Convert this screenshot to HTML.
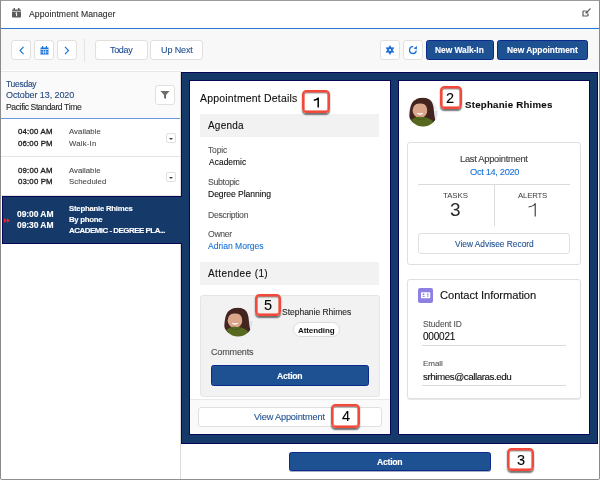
<!DOCTYPE html>
<html><head><meta charset="utf-8">
<style>
*{box-sizing:border-box;margin:0;padding:0}
html,body{width:600px;height:480px;overflow:hidden;background:#fff}
body{font-family:"Liberation Sans",sans-serif;color:#080707;position:relative}
.a{position:absolute}
.t{position:absolute;white-space:nowrap;line-height:1;will-change:transform;-webkit-text-stroke:0.1px currentColor}
.frame{position:absolute;left:0;top:0;width:600px;height:480px;border:1px solid #8a8a8a;border-top-color:#9a9a9a;border-bottom-color:#8f8f8f;border-radius:0 0 2px 2px;pointer-events:none}
.btn{position:absolute;background:#fff;border:1px solid #e1e0df;border-radius:3px}
.bb{position:absolute;background:#1e5192;border:1px solid #0b2a8c;border-radius:2.5px}
.badge{position:absolute;border:2px solid #f2493a;border-radius:4.5px;box-shadow:0 1.2px 1.5px rgba(0,0,0,.55), inset 0 0 0 0.8px rgba(242,73,58,.75), inset 0 1.6px 1px rgba(20,60,60,.45);font-family:"Liberation Sans",sans-serif;color:#000;text-align:center}
</style></head><body>

<!-- title bar -->
<svg class="a" style="left:12px;top:8px" width="9" height="9.5" viewBox="0 0 9 9.5">
  <rect x="0" y="1.4" width="9" height="8.1" rx="0.9" fill="#5c5c5c"/>
  <rect x="1.5" y="0" width="1.5" height="2.4" fill="#5c5c5c"/>
  <rect x="6" y="0" width="1.5" height="2.4" fill="#5c5c5c"/>
  <rect x="0" y="2.9" width="9" height="0.7" fill="#fff"/>
  <path d="M3.6 5.3 L4.6 4.7 V8.2" fill="none" stroke="#fff" stroke-width="1"/>
</svg>
<svg class="a" style="left:582px;top:8.4px" width="9" height="9" viewBox="0 0 9 9">
  <path d="M1 3 V8 H6" fill="none" stroke="#5c5c5c" stroke-width="1.2"/>
  <path d="M1 3 H3 M6 8 V6" fill="none" stroke="#5c5c5c" stroke-width="1.2"/>
  <path d="M8.5 0.5 L4 5 M4 2.5 V5 H6.5" fill="none" stroke="#5c5c5c" stroke-width="1.1"/>
</svg>
<div class="a" style="left:1px;top:28px;width:598px;height:1px;background:#2a76d2"></div>

<!-- toolbar -->
<div class="a" style="left:1px;top:29px;width:598px;height:41px;background:#f8f8f8"></div>
<div class="btn" style="left:11px;top:40px;width:20px;height:20px"></div>
<div class="btn" style="left:34px;top:40px;width:20px;height:20px"></div>
<div class="btn" style="left:57px;top:40px;width:20px;height:20px"></div>
<svg class="a" style="left:19px;top:46px" width="6" height="9" viewBox="0 0 6 9"><path d="M4.5 0.8 L1 4.5 L4.5 8.2" fill="none" stroke="#1b6fd6" stroke-width="1.1"/></svg>
<svg class="a" style="left:40px;top:46px" width="9" height="9" viewBox="0 0 9 9">
  <rect x="0.5" y="1.5" width="8" height="7" fill="#1b72d8"/>
  <rect x="2" y="0" width="1.2" height="2" fill="#1b72d8"/><rect x="5.8" y="0" width="1.2" height="2" fill="#1b72d8"/>
  <rect x="0.5" y="3" width="8" height="0.7" fill="#fff"/>
  <rect x="3" y="4" width="0.6" height="4" fill="#fff"/><rect x="5.4" y="4" width="0.6" height="4" fill="#fff"/>
  <rect x="0.5" y="5.7" width="8" height="0.6" fill="#fff"/>
</svg>
<svg class="a" style="left:63.5px;top:46px" width="6" height="9" viewBox="0 0 6 9"><path d="M1 0.8 L4.5 4.5 L1 8.2" fill="none" stroke="#1b6fd6" stroke-width="1.1"/></svg>
<div class="a" style="left:84px;top:39px;width:1px;height:23px;background:#e3e3e3"></div>
<div class="btn" style="left:95px;top:40px;width:53px;height:20px"></div>
<div class="btn" style="left:150px;top:40px;width:53px;height:20px"></div>

<div class="btn" style="left:380px;top:40px;width:20px;height:20px"></div>
<svg class="a" style="left:385px;top:45px" width="10" height="10" viewBox="0 0 10 10">
  <path d="M5 0.6 L6.3 2.7 L8.8 2.7 L7.5 5 L8.8 7.3 L6.3 7.3 L5 9.4 L3.7 7.3 L1.2 7.3 L2.5 5 L1.2 2.7 L3.7 2.7 Z" fill="#1b6fd6" stroke="#1b6fd6" stroke-width="0.6" stroke-linejoin="round"/>
  <circle cx="5" cy="5" r="1.1" fill="#fff"/>
</svg>
<div class="btn" style="left:403px;top:40px;width:20px;height:20px"></div>
<svg class="a" style="left:408px;top:45px" width="10" height="10" viewBox="0 0 10 10">
  <path d="M8.3 5.6 A3.4 3.4 0 1 1 5.2 1.7" fill="none" stroke="#1b6fd6" stroke-width="1.3"/>
  <path d="M5.6 3.6 L8.9 0.9 L8.9 4.4 Z" fill="#1b6fd6"/>
</svg>
<div class="bb" style="left:426px;top:40px;width:68px;height:20px"></div>
<div class="bb" style="left:497px;top:40px;width:91px;height:20px"></div>

<!-- left panel -->
<div class="a" style="left:1px;top:71px;width:179px;height:1px;background:#e6e6e6"></div>
<div class="a" style="left:1px;top:72px;width:179px;height:46px;background:#fafafa"></div>
<div class="a" style="left:1px;top:118px;width:179px;height:1px;background:#6a98dc"></div>
<div class="a" style="left:180px;top:71px;width:1px;height:408px;background:#dddbda"></div>
<div class="btn" style="left:155px;top:85px;width:20px;height:20px"></div>
<svg class="a" style="left:160px;top:90px" width="10" height="10" viewBox="0 0 10 10"><path d="M0.5 1 H9.5 L6 5 V9 L4 8 V5 Z" fill="#706e6b"/></svg>

<div class="a" style="left:1px;top:156px;width:179px;height:1px;background:#e5e5e5"></div>
<div class="btn" style="left:166px;top:133px;width:10px;height:10px;border-radius:2px"></div>
<svg class="a" style="left:168px;top:137px" width="6" height="4" viewBox="0 0 6 4"><path d="M1 1 H5 L3 3 Z" fill="#3e3e3c"/></svg>

<div class="a" style="left:1px;top:195px;width:179px;height:1px;background:#e5e5e5"></div>
<div class="btn" style="left:166px;top:172px;width:10px;height:10px;border-radius:2px"></div>
<svg class="a" style="left:168px;top:176px" width="6" height="4" viewBox="0 0 6 4"><path d="M1 1 H5 L3 3 Z" fill="#3e3e3c"/></svg>



<!-- navy panel -->
<div class="a" style="left:181px;top:72px;width:417px;height:372px;background:#153a6a;border:1px solid #07075a"></div>
<div class="a" style="left:2px;top:196px;width:180px;height:48px;background:#153a6a;border:1px solid #07075a;border-right:none"></div>
<svg class="a" style="left:4px;top:218px" width="6" height="5" viewBox="0 0 6 5"><path d="M0 0 L3 2.5 L0 5 Z M3 0 L6 2.5 L3 5 Z" fill="#e3262c"/></svg>
<div class="a" style="left:189px;top:80px;width:202px;height:355px;background:#fff;border:1px solid #07075a"></div>
<div class="a" style="left:398px;top:80px;width:192px;height:355px;background:#fff;border:1px solid #07075a"></div>

<!-- card 1 -->
<div class="a" style="left:200px;top:114px;width:179px;height:23px;background:#f3f2f2"></div>
<div class="a" style="left:200px;top:262px;width:179px;height:23px;background:#f3f2f2"></div>

<div class="a" style="left:200px;top:295px;width:180px;height:102px;background:#f3f2f2;border:1px solid #e5e5e5;border-radius:3px"></div>
<svg class="a avatar" style="left:223px;top:307px" width="30" height="30" viewBox="0 0 30 30">
  <defs><clipPath id="c1"><circle cx="15" cy="15" r="14.6"/></clipPath></defs>
  <g clip-path="url(#c1)">
    <rect width="30" height="30" fill="#f1f1f3"/>
    <rect x="20" y="14" width="10" height="16" fill="#dfe4ea"/>
    <path d="M1.5 24 C1 16 2 7 6 3.2 C9.5 0.2 16.5 0 21 2.2 C25 4.5 25.8 10 26 15 C26.3 19 27 22 28 25 L22 26 L6 26 Z" fill="#43241f"/>
    <ellipse cx="12" cy="13.4" rx="7.4" ry="7.6" fill="#d9a68c"/>
    <path d="M4.2 10 C4.2 6 6.5 3.3 11 3 C15.5 2.8 19.3 5 19.6 9 C17.5 6.9 15 6.3 11.5 6.5 C8 6.7 5.8 8 4.2 10 Z" fill="#43241f"/>
    <path d="M18.5 8 C19.8 12 19.6 17 18.8 21 L21.5 21 C22 16 21.5 11 20.5 7 Z" fill="#43241f"/>
    <path d="M9 16.2 C10.5 17.8 13.5 17.8 15 16.2 C13.5 16.8 10.5 16.8 9 16.2 Z" fill="#fff" stroke="#f4ece8" stroke-width="0.9"/>
    <path d="M0 30 C0.5 25 4 21.5 8 20.2 C10 19.6 14 19.6 17 20.3 C22 21.5 26 24 29 30 Z" fill="#56691f"/>
    <path d="M7.5 21.5 C10.5 22.6 15 22.6 18 21.5" fill="none" stroke="#44561a" stroke-width="0.7"/>
  </g>
</svg>
<div class="a" style="left:293px;top:322px;width:47px;height:15px;background:#fff;border:1px solid #dddbda;border-radius:8px"></div>
<div class="bb" style="left:211px;top:365px;width:158px;height:21px"></div>

<div class="a" style="left:190px;top:399px;width:200px;height:1px;background:#e8e8e8"></div>
<div class="a" style="left:190px;top:400px;width:200px;height:34px;background:#fafafa"></div>
<div class="btn" style="left:198px;top:407px;width:184px;height:20px"></div>

<!-- card 2 -->
<svg class="a avatar" style="left:408px;top:97px" width="30" height="30" viewBox="0 0 30 30">
  <defs><clipPath id="c2"><circle cx="15" cy="15" r="14.6"/></clipPath></defs>
  <g clip-path="url(#c2)">
    <rect width="30" height="30" fill="#f1f1f3"/>
    <rect x="20" y="14" width="10" height="16" fill="#dfe4ea"/>
    <path d="M1.5 24 C1 16 2 7 6 3.2 C9.5 0.2 16.5 0 21 2.2 C25 4.5 25.8 10 26 15 C26.3 19 27 22 28 25 L22 26 L6 26 Z" fill="#43241f"/>
    <ellipse cx="12" cy="13.4" rx="7.4" ry="7.6" fill="#d9a68c"/>
    <path d="M4.2 10 C4.2 6 6.5 3.3 11 3 C15.5 2.8 19.3 5 19.6 9 C17.5 6.9 15 6.3 11.5 6.5 C8 6.7 5.8 8 4.2 10 Z" fill="#43241f"/>
    <path d="M18.5 8 C19.8 12 19.6 17 18.8 21 L21.5 21 C22 16 21.5 11 20.5 7 Z" fill="#43241f"/>
    <path d="M9 16.2 C10.5 17.8 13.5 17.8 15 16.2 C13.5 16.8 10.5 16.8 9 16.2 Z" fill="#fff" stroke="#f4ece8" stroke-width="0.9"/>
    <path d="M0 30 C0.5 25 4 21.5 8 20.2 C10 19.6 14 19.6 17 20.3 C22 21.5 26 24 29 30 Z" fill="#56691f"/>
    <path d="M7.5 21.5 C10.5 22.6 15 22.6 18 21.5" fill="none" stroke="#44561a" stroke-width="0.7"/>
  </g>
</svg>

<div class="a" style="left:407px;top:142px;width:174px;height:123px;border:1px solid #e0e0e0;border-radius:3px"></div>
<div class="a" style="left:418px;top:184px;width:152px;height:1px;background:#dddbda"></div>
<div class="a" style="left:494px;top:185px;width:1px;height:41px;background:#dddbda"></div>
<div class="btn" style="left:418px;top:233px;width:152px;height:21px;border-color:#e0e0e0"></div>

<div class="a" style="left:407px;top:279px;width:174px;height:120px;border:1px solid #e0e0e0;border-radius:3px;box-shadow:0 1px 1px rgba(0,0,0,.1)"></div>
<svg class="a" style="left:418px;top:288px" width="15" height="15" viewBox="0 0 15 15">
  <rect width="15" height="15" rx="2" fill="#8e7fe2"/>
  <rect x="3" y="4.2" width="9.2" height="6" rx="0.5" fill="#fff"/>
  <circle cx="5.6" cy="6.3" r="0.95" fill="#8e7fe2"/>
  <path d="M4 9 C4.2 7.9 7 7.9 7.2 9 Z" fill="#8e7fe2"/>
  <path d="M9.9 5.6 V9 M8.9 6 C9.5 6 9.9 5.8 9.9 5.6" fill="none" stroke="#8e7fe2" stroke-width="0.9"/>
</svg>
<div class="a" style="left:422px;top:345px;width:144px;height:1px;background:#dddbda"></div>
<div class="a" style="left:422px;top:385px;width:144px;height:1px;background:#dddbda"></div>

<!-- footer -->
<div class="bb" style="left:289px;top:452px;width:202px;height:19px;box-shadow:0 1px 0 rgba(60,80,120,.45)"></div>

<svg class="a" style="left:527px;top:202px" width="11" height="16" viewBox="0 0 11 16"><path d="M8.2 1.2 V14.4 M8.2 1.4 C7.4 3.2 4.4 4.6 1.6 4.9" fill="none" stroke="#2a2a2a" stroke-width="1.05"/></svg>
<div class="t" style="left:29.21px;top:9.55px;font-size:8.66px;letter-spacing:0.073px;color:#2e2e2e">Appointment Manager</div>
<div class="t" style="left:110.15px;top:45.60px;font-size:9.00px;letter-spacing:-0.339px;color:#1f4f8f">Today</div>
<div class="t" style="left:160.67px;top:45.56px;font-size:9.00px;letter-spacing:-0.123px;color:#1f4f8f">Up Next</div>
<div class="t" style="left:435.29px;top:45.58px;font-size:8.41px;letter-spacing:-0.042px;font-weight:bold;color:#ffffff">New Walk-In</div>
<div class="t" style="left:506.57px;top:45.92px;font-size:8.42px;letter-spacing:-0.030px;font-weight:bold;color:#ffffff">New Appointment</div>
<div class="t" style="left:5.75px;top:79.64px;font-size:8.51px;letter-spacing:-0.279px;color:#23467f">Tuesday</div>
<div class="t" style="left:6.10px;top:90.82px;font-size:9.00px;letter-spacing:-0.084px;color:#23467f">October 13, 2020</div>
<div class="t" style="left:5.70px;top:102.67px;font-size:8.61px;letter-spacing:-0.395px;color:#2a2a2a">Pacific Standard Time</div>
<div class="t" style="left:17.66px;top:128.08px;font-size:7.80px;letter-spacing:0.218px;-webkit-text-stroke:0.3px #1a1a1a;color:#1a1a1a">04:00 AM</div>
<div class="t" style="left:17.66px;top:139.79px;font-size:7.80px;letter-spacing:0.176px;-webkit-text-stroke:0.3px #1a1a1a;color:#1a1a1a">06:00 PM</div>
<div class="t" style="left:69.10px;top:127.99px;font-size:7.80px;letter-spacing:0.041px;color:#4a4a4a">Available</div>
<div class="t" style="left:69.09px;top:139.76px;font-size:7.80px;letter-spacing:0.181px;color:#4a4a4a">Walk-In</div>
<div class="t" style="left:17.66px;top:166.84px;font-size:7.80px;letter-spacing:0.218px;-webkit-text-stroke:0.3px #1a1a1a;color:#1a1a1a">09:00 AM</div>
<div class="t" style="left:17.66px;top:177.57px;font-size:7.80px;letter-spacing:0.176px;-webkit-text-stroke:0.3px #1a1a1a;color:#1a1a1a">03:00 PM</div>
<div class="t" style="left:69.15px;top:166.97px;font-size:7.80px;letter-spacing:0.002px;color:#4a4a4a">Available</div>
<div class="t" style="left:68.96px;top:177.58px;font-size:7.80px;letter-spacing:0.061px;color:#4a4a4a">Scheduled</div>
<div class="t" style="left:17.49px;top:209.79px;font-size:8.50px;letter-spacing:-0.071px;font-weight:bold;-webkit-text-stroke:0.12px #fff;color:#ffffff">09:00 AM</div>
<div class="t" style="left:17.13px;top:220.63px;font-size:8.50px;letter-spacing:-0.072px;font-weight:bold;-webkit-text-stroke:0.12px #fff;color:#ffffff">09:30 AM</div>
<div class="t" style="left:68.64px;top:204.74px;font-size:7.77px;letter-spacing:-0.229px;font-weight:bold;-webkit-text-stroke:0.12px #fff;color:#ffffff">Stephanie Rhimes</div>
<div class="t" style="left:68.64px;top:215.80px;font-size:7.85px;letter-spacing:-0.320px;font-weight:bold;-webkit-text-stroke:0.12px #fff;color:#ffffff">By phone</div>
<div class="t" style="left:68.77px;top:226.58px;font-size:7.90px;letter-spacing:-0.474px;font-weight:bold;-webkit-text-stroke:0.12px #fff;color:#ffffff">ACADEMIC - DEGREE PLA...</div>
<div class="t" style="left:200.20px;top:93.55px;font-size:10.48px;letter-spacing:0.200px;color:#0e0e0e">Appointment Details</div>
<div class="t" style="left:208.40px;top:120.86px;font-size:10.00px;letter-spacing:0.205px;color:#0e0e0e">Agenda</div>
<div class="t" style="left:208.33px;top:145.51px;font-size:8.47px;letter-spacing:-0.149px;color:#545454">Topic</div>
<div class="t" style="left:208.50px;top:157.68px;font-size:8.36px;letter-spacing:0.084px;color:#0c0c0c">Academic</div>
<div class="t" style="left:208.13px;top:178.04px;font-size:8.76px;letter-spacing:-0.338px;color:#545454">Subtopic</div>
<div class="t" style="left:208.19px;top:189.93px;font-size:8.61px;letter-spacing:-0.076px;color:#0c0c0c">Degree Planning</div>
<div class="t" style="left:207.73px;top:210.90px;font-size:8.62px;letter-spacing:-0.263px;color:#545454">Description</div>
<div class="t" style="left:207.71px;top:229.67px;font-size:8.63px;letter-spacing:-0.318px;color:#545454">Owner</div>
<div class="t" style="left:208.05px;top:241.50px;font-size:8.61px;letter-spacing:-0.029px;color:#1672d6">Adrian Morges</div>
<div class="t" style="left:208.00px;top:268.52px;font-size:10.07px;letter-spacing:0.395px;color:#0e0e0e">Attendee (1)</div>
<div class="t" style="left:282.12px;top:308.00px;font-size:8.52px;letter-spacing:-0.024px;color:#262626">Stephanie Rhimes</div>
<div class="t" style="left:298.46px;top:326.75px;font-size:8.00px;letter-spacing:-0.082px;font-weight:bold;-webkit-text-stroke:0;color:#111111">Attending</div>
<div class="t" style="left:211.37px;top:347.68px;font-size:9.00px;letter-spacing:-0.130px;color:#4a4a4a">Comments</div>
<div class="t" style="left:277.13px;top:371.96px;font-size:8.70px;letter-spacing:-0.277px;font-weight:bold;color:#ffffff">Action</div>
<div class="t" style="left:254.25px;top:412.51px;font-size:9.20px;letter-spacing:-0.162px;color:#1f4f8f">View Appointment</div>
<div class="t" style="left:465.13px;top:99.94px;font-size:9.70px;letter-spacing:0.223px;font-weight:bold;color:#0e0e0e">Stephanie Rhimes</div>
<div class="t" style="left:459.57px;top:154.50px;font-size:9.34px;letter-spacing:-0.275px;color:#3a3a3a">Last Appointment</div>
<div class="t" style="left:469.71px;top:167.66px;font-size:9.30px;letter-spacing:-0.336px;color:#1672d6">Oct 14, 2020</div>
<div class="t" style="left:443.31px;top:191.61px;font-size:7.80px;letter-spacing:-0.025px;-webkit-text-stroke:0;color:#3a3a3a">TASKS</div>
<div class="t" style="left:517.62px;top:191.68px;font-size:7.80px;letter-spacing:-0.174px;-webkit-text-stroke:0;color:#3a3a3a">ALERTS</div>
<div class="t" style="left:449.78px;top:199.95px;font-size:19.00px;letter-spacing:0.000px;-webkit-text-stroke:0;color:#2a2a2a">3</div>
<div class="t" style="left:454.57px;top:240.12px;font-size:8.36px;letter-spacing:0.000px;color:#1f4f8f">View Advisee Record</div>
<div class="t" style="left:440.38px;top:289.86px;font-size:11.20px;letter-spacing:-0.081px;color:#0e0e0e">Contact Information</div>
<div class="t" style="left:422.65px;top:319.83px;font-size:8.43px;letter-spacing:-0.102px;color:#545454">Student ID</div>
<div class="t" style="left:422.85px;top:331.73px;font-size:10.00px;letter-spacing:-0.192px;color:#0c0c0c">000021</div>
<div class="t" style="left:422.63px;top:359.58px;font-size:8.05px;letter-spacing:-0.084px;color:#545454">Email</div>
<div class="t" style="left:422.63px;top:371.66px;font-size:9.90px;letter-spacing:-0.473px;color:#0c0c0c">srhimes@callaras.edu</div>
<div class="t" style="left:376.51px;top:457.74px;font-size:8.70px;letter-spacing:-0.273px;font-weight:bold;color:#ffffff">Action</div>
<div class="t" style="left:446.14px;top:90.60px;font-size:14.50px;letter-spacing:0.000px;color:#000000">2</div>
<div class="t" style="left:516.55px;top:452.72px;font-size:14.50px;letter-spacing:0.000px;color:#000000">3</div>
<div class="t" style="left:342.38px;top:408.67px;font-size:14.50px;letter-spacing:0.000px;color:#000000">4</div>
<div class="t" style="left:264.18px;top:297.72px;font-size:14.50px;letter-spacing:0.000px;color:#000000">5</div>

<!-- badges -->
<div class="badge" style="left:302px;top:90px;width:28px;height:23px"><svg style="position:absolute;left:7.6px;top:2.6px" width="8" height="13" viewBox="0 0 8 13"><path d="M6.2 2.6 V12.5 M6.2 2.8 C5.6 4.3 3.6 5.1 1.8 5.2" fill="none" stroke="#000" stroke-width="1.5"/></svg></div>
<div class="badge" style="left:440px;top:86px;width:22px;height:23px"></div>
<div class="badge" style="left:507px;top:448px;width:27px;height:23px"></div>
<div class="badge" style="left:331px;top:404px;width:29px;height:24px"></div>
<div class="badge" style="left:255px;top:294px;width:26px;height:22px"></div>

<div class="frame"></div>
</body></html>
